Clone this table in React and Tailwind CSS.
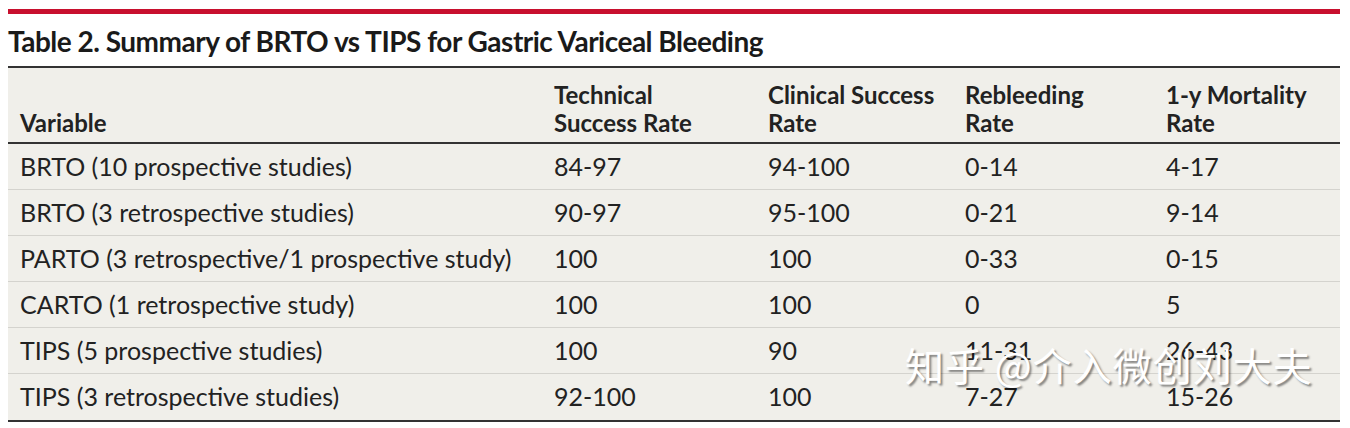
import React from 'react';

const rows = [
  ['BRTO (10 prospective studies)', '84-97', '94-100', '0-14', '4-17'],
  ['BRTO (3 retrospective studies)', '90-97', '95-100', '0-21', '9-14'],
  ['PARTO (3 retrospective/1 prospective study)', '100', '100', '0-33', '0-15'],
  ['CARTO (1 retrospective study)', '100', '100', '0', '5'],
  ['TIPS (5 prospective studies)', '100', '90', '11-31', '26-43'],
  ['TIPS (3 retrospective studies)', '92-100', '100', '7-27', '15-26'],
];

const cols = 'grid grid-cols-[534px_214px_197px_201px_186px]';

export default function App() {
  return (
    <div className="relative w-[1350px] h-[428px] bg-white pl-[8px] pr-[10px] text-[#222]" style={{ fontFamily: 'Lato, "Open Sans", sans-serif' }}>
      <div className="pt-[9px]">
        <div className="h-[5px] bg-[#c8102e]" />
      </div>
      {/* Title */}
      <div className="h-[52px] flex items-center pt-[1px] text-[28px] font-bold tracking-[-0.5px] text-[#1a1a1a]">
        Table 2. Summary of BRTO vs TIPS for Gastric Variceal Bleeding
      </div>

      <div className="border-t-2 border-b-2 border-[#333] bg-[#f0efea]">
        {/* Header */}
        <div className={`${cols} h-[76px] border-b-2 border-[#333] text-[24px] font-bold leading-[28px] items-end pb-[5px]`}>
          <div className="pl-[12px]">Variable</div>
          <div className="pl-[12px]">Technical<br />Success Rate</div>
          <div className="pl-[12px]">Clinical Success<br />Rate</div>
          <div className="pl-[12px]">Rebleeding<br />Rate</div>
          <div className="pl-[12px]">1-y Mortality<br />Rate</div>
        </div>
        {rows.map((r, i) => (
          <div key={i} className={`${cols} h-[46px] items-center text-[25px] ${i < rows.length - 1 ? 'border-b border-[#d4d3ce]' : ''}`}>
            {r.map((c, j) => (
              <div key={j} className="pl-[12px]">{c}</div>
            ))}
          </div>
        ))}
      </div>

      {/* watermark */}
      <div
        className="absolute left-[905px] top-[345px] text-[39px] leading-none text-white tracking-[1px]"
        style={{ fontFamily: '"Noto Sans CJK SC", sans-serif', textShadow: '2px 2px 2px rgba(0,0,0,0.45)' }}
      >
        知乎 @介入微创刘大夫
      </div>
    </div>
  );
}
